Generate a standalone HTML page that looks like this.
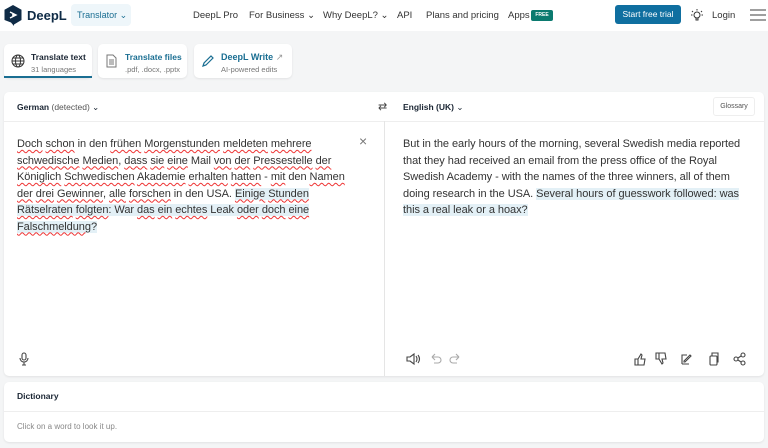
<!DOCTYPE html>
<html><head><meta charset="utf-8"><style>
*{box-sizing:border-box;margin:0;padding:0}
body{width:768px;height:448px;overflow:hidden;background:#f4f5f6;font-family:"Liberation Sans",sans-serif;color:#1a2533;position:relative}
.abs{position:absolute}
.hdr{left:0;top:0;width:768px;height:31px;background:#fff}
.nav{font-size:9.5px;color:#333;top:10px}
.card{background:#fff;border-radius:5px;box-shadow:0 1px 2px rgba(0,0,0,.08)}
.tab{top:44px;height:34px}
.tt{font-size:9px;font-weight:bold;top:8px;white-space:nowrap}
.ts{font-size:7.5px;color:#777;top:21px;white-space:nowrap}
.txt{font-size:11px;line-height:16.5px;color:#333;white-space:nowrap;letter-spacing:-0.05px}
u{text-decoration:underline wavy #e33;text-decoration-thickness:1px;text-underline-offset:2px}
.hl{background:#e3f0f6}
</style></head><body>
<div class="abs hdr"></div>
<svg class="abs" style="left:4px;top:5px" width="18" height="21" viewBox="0 0 18 21"><path d="M9 0L17.5 4.8V15L10 19.5V21L7 17.5 0.5 15V4.8Z" fill="#0f2b46"/><path d="M6 7L12 10 6 13M12 10H8" stroke="#fff" stroke-width="1.4" fill="none"/></svg>
<div class="abs" style="left:27px;top:8px;font-size:13px;font-weight:bold;color:#0f2b46">DeepL</div>
<div class="abs" style="left:71px;top:4px;width:60px;height:22px;background:#eef6fa;border-radius:4px;font-size:9px;color:#1a6e92;padding:6px 0 0 6px">Translator ⌄</div>
<div class="abs nav" style="left:193px">DeepL Pro</div>
<div class="abs nav" style="left:249px">For Business ⌄</div>
<div class="abs nav" style="left:323px">Why DeepL? ⌄</div>
<div class="abs nav" style="left:397px">API</div>
<div class="abs nav" style="left:426px">Plans and pricing</div>
<div class="abs nav" style="left:508px">Apps</div>
<div class="abs" style="left:531px;top:10px;width:22px;height:11px;background:#0b7a6f;border-radius:2px;color:#fff;font-size:5px;font-weight:bold;text-align:center;line-height:11px">FREE</div>
<div class="abs" style="left:615px;top:5px;width:66px;height:19px;background:#0f6fa0;border-radius:3px;color:#fff;font-size:8.5px;text-align:center;line-height:19px">Start free trial</div>
<svg class="abs" style="left:690px;top:8px" width="14" height="14" viewBox="0 0 14 14" fill="none" stroke="#333" stroke-width="1"><circle cx="7" cy="7" r="3"/><path d="M6 10v2h2v-2M7 1v1.5M2 3l1 1M12 3l-1 1M1 7h1.5M11.5 7H13"/></svg>
<div class="abs nav" style="left:712px">Login</div>
<svg class="abs" style="left:750px;top:9px" width="16" height="12"><path d="M0 1h16M0 6h16M0 11h16" stroke="#666" stroke-width="1.2"/></svg>

<div class="abs card tab" style="left:4px;width:88px"><svg class="abs" style="left:7px;top:10px" width="14" height="14" viewBox="0 0 14 14" fill="none" stroke="#333" stroke-width="1"><circle cx="7" cy="7" r="6"/><ellipse cx="7" cy="7" rx="2.5" ry="6"/><path d="M1 7h12M2 4h10M2 10h10"/></svg><div class="abs tt" style="left:27px;font-size:8.5px">Translate text</div><div class="abs ts" style="left:27px">31 languages</div><div class="abs" style="left:0;bottom:0;width:88px;height:2px;background:#1a6e92"></div></div>
<div class="abs card tab" style="left:98px;width:89px"><svg class="abs" style="left:8px;top:10px" width="11" height="14" fill="none" stroke="#777" stroke-width="1"><path d="M1 1h6l3 3v9H1z M3 6h5M3 8h5M3 10h5"/></svg><div class="abs tt" style="left:27px;color:#1a6e92;font-size:8.5px">Translate files</div><div class="abs ts" style="left:27px">.pdf, .docx, .pptx</div></div>
<div class="abs card tab" style="left:194px;width:98px"><svg class="abs" style="left:7px;top:10px" width="14" height="14" fill="none" stroke="#1a6e92" stroke-width="1.2"><path d="M2 12l1-3 7-7 2 2-7 7z"/></svg><div class="abs tt" style="left:27px;color:#1a6e92">DeepL Write <span style="color:#999;font-weight:normal">↗</span></div><div class="abs ts" style="left:27px">AI-powered edits</div></div>

<div class="abs card" style="left:4px;top:92px;width:760px;height:284px"></div>
<div class="abs" style="left:4px;top:121px;width:760px;height:1px;background:#eee"></div>
<div class="abs" style="left:384px;top:121px;width:1px;height:255px;background:#e5e5e5"></div>
<div class="abs" style="left:17px;top:102px;font-size:8.5px"><b>German</b> <span style="color:#555">(detected)</span> ⌄</div>
<div class="abs" style="left:378px;top:100px;font-size:11px;color:#444">⇄</div>
<div class="abs" style="left:403px;top:102px;font-size:8.5px"><b>English (UK)</b> ⌄</div>
<div class="abs" style="left:713px;top:97px;width:42px;height:19px;border:1px solid #eee;border-radius:3px;font-size:7px;color:#555;text-align:center;line-height:17px">Glossary</div>
<div class="abs" style="left:359px;top:133px;font-size:14px;color:#777">×</div>
<div class="abs txt" style="left:17px;top:136px"><u>Doch</u> <u>schon</u> in den <u>frühen</u> <u>Morgenstunden</u> <u>meldeten</u> <u>mehrere</u><br><u>schwedische</u> <u>Medien</u>, <u>dass</u> <u>sie</u> <u>eine</u> Mail <u>von</u> <u>der</u> <u>Pressestelle</u> <u>der</u><br><u>Königlich</u> <u>Schwedischen</u> <u>Akademie</u> <u>erhalten</u> <u>hatten</u> - <u>mit</u> den <u>Namen</u><br><u>der</u> <u>drei</u> <u>Gewinner</u>, <u>alle</u> <u>forschen</u> in den USA. <span class="hl"><u>Einige</u> <u>Stunden</u></span><br><span class="hl"><u>Rätselraten</u> <u>folgten</u>: War <u>das</u> <u>ein</u> <u>echtes</u> Leak <u>oder</u> <u>doch</u> <u>eine</u></span><br><span class="hl"><u>Falschmeldung</u>?</span></div>
<div class="abs txt" style="left:403px;top:136px">But in the early hours of the morning, several Swedish media reported<br>that they had received an email from the press office of the Royal<br>Swedish Academy - with the names of the three winners, all of them<br>doing research in the USA. <span class="hl">Several hours of guesswork followed: was</span><br><span class="hl">this a real leak or a hoax?</span></div>
<svg class="abs" style="left:19px;top:352px" width="10" height="14" fill="none" stroke="#444" stroke-width="1.1"><rect x="3" y="1" width="4" height="7" rx="2"/><path d="M1 6a4 4 0 008 0M5 10v3M3 13h4"/></svg>
<svg class="abs" style="left:406px;top:352px" width="64" height="14" fill="none" stroke="#444" stroke-width="1.1"><path d="M1 5h3l4-3v10l-4-3H1z M10 4q2 3 0 6M12 3q3 4 0 8"/><path stroke="#aaa" d="M26 5h6a3 3 0 010 6h-4M26 5l3-3M26 5l3 3 M53 5h-6a3 3 0 000 6h4M53 5l-3-3M53 5l-3 3"/></svg>
<svg class="abs" style="left:634px;top:352px" width="114" height="14" fill="none" stroke="#444" stroke-width="1.1"><path d="M1 7h3v6H1z M4 7l3-5 1 1-1 4h4l-1 6H4"/><path d="M22 7h3V1h-3z M25 7l3 5 1-1-1-4h4l-1-6h-6"/><path d="M48 12h7M48 12V3h5M50 9l6-6 1 1-6 6h-1z"/><rect x="76" y="4" width="7" height="9" rx="1"/><path d="M78 4V1h6v9h-1"/><circle cx="102" cy="7" r="2"/><circle cx="109" cy="3" r="2"/><circle cx="109" cy="11" r="2"/><path d="M104 6l3-2M104 8l3 2"/></svg>

<div class="abs card" style="left:4px;top:382px;width:760px;height:60px"></div>
<div class="abs" style="left:4px;top:411px;width:760px;height:1px;background:#eee"></div>
<div class="abs" style="left:17px;top:391px;font-size:8.5px;font-weight:bold">Dictionary</div>
<div class="abs" style="left:17px;top:422px;font-size:8px;color:#888">Click on a word to look it up.</div>
</body></html>
